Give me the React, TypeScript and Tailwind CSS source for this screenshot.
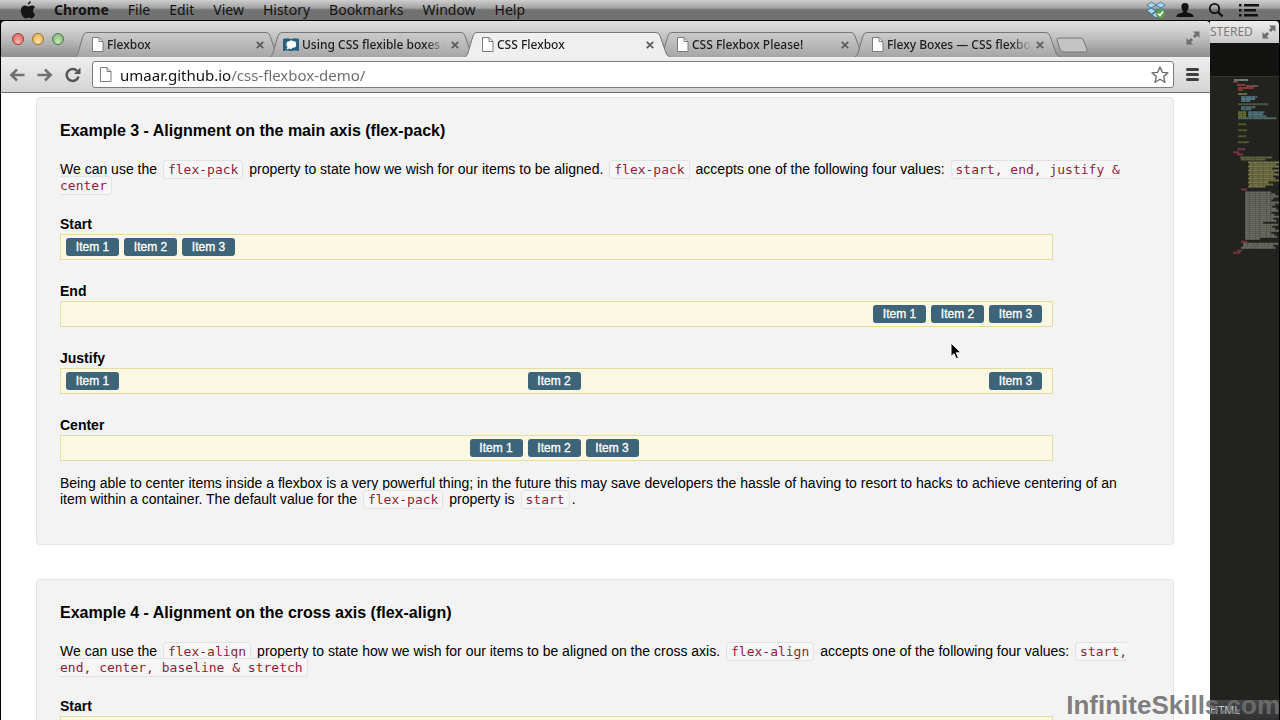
import React from "react";

const menuItems = ["File", "Edit", "View", "History", "Bookmarks", "Window", "Help"];

const tabs = [
  { title: "Flexbox", icon: "page", active: false },
  { title: "Using CSS flexible boxes –", icon: "mdn", active: false },
  { title: "CSS Flexbox", icon: "page", active: true },
  { title: "CSS Flexbox Please!", icon: "page", active: false },
  { title: "Flexy Boxes — CSS flexbox", icon: "page", active: false },
];

const packExamples = [
  { name: "Start", justify: "justify-start" },
  { name: "End", justify: "justify-end" },
  { name: "Justify", justify: "justify-between" },
  { name: "Center", justify: "justify-center" },
];

// [x, y, width, colour] of every line in the editor minimap
const minimapLines: [number, number, number, string][] = [
  [24, 3, 14, "#8a8a80"],
  [23, 5, 5, "#8b3a4a"],
  [27, 8, 8, "#a04040"],
  [36, 9, 12, "#7d5a45"],
  [28, 11, 16, "#a33d3d"],
  [28, 13, 5, "#8b3a3a"],
  [28, 17, 9, "#6c7a45"],
  [31, 20, 16, "#4f7884"],
  [31, 22, 14, "#5b8490"],
  [31, 24, 9, "#4f7884"],
  [28, 27, 30, "#58614a"],
  [31, 30, 14, "#4f7884"],
  [31, 32, 10, "#4f7884"],
  [28, 35, 8, "#6f7a35"],
  [38, 35, 16, "#4f7884"],
  [28, 37, 8, "#6f7a35"],
  [38, 37, 15, "#5b8490"],
  [28, 39, 8, "#6f7a35"],
  [38, 39, 18, "#4f7884"],
  [28, 41, 38, "#59786f"],
  [28, 47, 8, "#59622f"],
  [28, 53, 9, "#59622f"],
  [28, 59, 8, "#59622f"],
  [28, 65, 11, "#59622f"],
  [27, 72, 8, "#7a3f4a"],
  [23, 75, 6, "#8b3a4a"],
  [27, 77, 6, "#8b3a4a"],
  [30, 80, 32, "#6a6c45"],
  [31, 82, 24, "#6a6c45"],
  [38, 85, 31, "#8a8a55"],
  [39, 87, 27, "#7c7c4a"],
  [38, 89, 31, "#8a8a55"],
  [39, 91, 23, "#7c7c4a"],
  [38, 93, 31, "#8a8a55"],
  [39, 95, 25, "#7c7c4a"],
  [38, 97, 31, "#8a8a55"],
  [39, 99, 24, "#7c7c4a"],
  [38, 101, 27, "#8a8a55"],
  [39, 103, 31, "#7c7c4a"],
  [38, 105, 20, "#8a8a55"],
  [39, 107, 24, "#7c7c4a"],
  [38, 109, 17, "#8a8a55"],
  [31, 112, 6, "#8b3a4a"],
  [35, 115, 26, "#77776f"],
  [35, 117, 30, "#77776f"],
  [35, 119, 33, "#77776f"],
  [35, 121, 28, "#77776f"],
  [35, 123, 26, "#77776f"],
  [35, 125, 34, "#77776f"],
  [35, 127, 30, "#77776f"],
  [35, 129, 27, "#77776f"],
  [35, 131, 31, "#77776f"],
  [35, 133, 33, "#77776f"],
  [35, 135, 26, "#77776f"],
  [35, 137, 29, "#77776f"],
  [35, 139, 34, "#77776f"],
  [35, 141, 28, "#77776f"],
  [35, 143, 31, "#77776f"],
  [35, 145, 18, "#77776f"],
  [35, 147, 33, "#77776f"],
  [35, 149, 27, "#77776f"],
  [35, 151, 30, "#77776f"],
  [35, 153, 34, "#77776f"],
  [35, 155, 26, "#77776f"],
  [35, 157, 29, "#77776f"],
  [35, 159, 32, "#77776f"],
  [35, 161, 15, "#77776f"],
  [31, 164, 6, "#8b3a4a"],
  [33, 166, 35, "#77776f"],
  [33, 168, 30, "#77776f"],
  [31, 170, 34, "#77776f"],
  [27, 173, 5, "#8b3a4a"],
  [23, 175, 7, "#8b3a4a"],
];

const AppleLogo = () => (
  <svg width="16" height="18" viewBox="0 0 16 18" className="fill-[#161616]">
    <path d="M10.8 0C11 1.600 9.600 3.500 7.900 3.500 7.700 1.900 9.200.2 10.800 0zM15.200 13.300c-.7 1.900-2.200 4.200-3.700 4.200-1.100 0-1.600-.7-2.900-.7s-1.900.7-2.900.7C3.600 17.500.8 13.500.8 9.600c0-3.200 2-5 4.100-5 1.400 0 2.500.9 3.400.9.8 0 2.100-1 3.700-1 1.200 0 2.400.6 3.100 1.700-2.900 1.700-2.400 5.800.1 7.100z" />
  </svg>
);

const PageIcon = () => (
  <svg width="12" height="15" viewBox="0 0 12 15" className="shrink-0">
    <path d="M.5.5h6.500l4 4v10H.5z" fill="#fff" stroke="#7b7b7b" />
    <path d="M7 .5v4h4" fill="none" stroke="#7b7b7b" />
  </svg>
);

const MdnIcon = () => (
  <svg width="16" height="14" viewBox="0 0 16 14" className="shrink-0">
    <path d="M0 1q4-1.500 8 0 4-1.500 8 0v12q-4-1-8 0-4-1-8 0z" fill="#28617f" />
    <path d="M3.500 6q0-3 3-2.700Q8 1.500 9.800 3.100 13.500 3 13 6.500 13.500 10 9.500 9.800L8 11.300 6.500 10.500 3.500 11.500l1-2.500Q3 8 3.500 6z" fill="#fff" />
  </svg>
);

const ExpandIcon = () => (
  <svg width="14" height="14" viewBox="0 0 14 14" className="fill-[#6f6f6f]">
    <path d="M7 .5h6.500V7l-2.200-2.200L9 7.100 6.900 5l2.300-2.300zM7 13.500H.5V7l2.200 2.200L5 6.900 7.100 9l-2.300 2.300z" />
  </svg>
);

const MenuBar = () => (
  <header className="flex h-[21px] shrink-0 items-center border-b border-black bg-linear-to-b from-[#cfcfcf] from-0% via-[#a2a2a2] via-40% to-[#727272] to-50% px-5 text-sm leading-5 text-[#141414]">
    <button aria-label="Apple menu">
      <AppleLogo />
    </button>
    <nav className="ml-[18px] flex flex-1 items-center gap-[19px]">
      <button className="font-bold">Chrome</button>
      {menuItems.map((item) => (
        <button key={item}>{item}</button>
      ))}
    </nav>
    <div className="flex items-center gap-[14px]">
      <svg width="20" height="18" viewBox="0 0 20 18" className="-mr-1">
        <path d="M5.500 1 10 4 5 7 .8 4.200zM14.500 1 10 4l5 3 4.200-2.800zM.8 9.500 5 7l5 3-4.500 3zM19.200 9.500 15 7l-5 3 4.500 3zM5.500 13.800 10 11l4.500 2.800L10 16.800z" fill="#a9d4ec" stroke="#2c6b92" strokeWidth=".8" />
        <circle cx="14.500" cy="12.500" r="4.500" fill="#5d9b45" />
        <path d="m12 12.500 2 2 3-4" fill="none" stroke="#fff" strokeWidth="1.500" />
      </svg>
      <svg width="18" height="16" viewBox="0 0 18 16" className="fill-[#111]">
        <path d="M9 1c2.500 0 3.800 1.600 3.600 4-.1 1.600-.8 3-1.600 3.900-.3 1.300.4 1.700 2 2.200 2.600.8 4.500 1.400 4.700 3.900H.3c.2-2.500 2.100-3.100 4.700-3.900 1.600-.5 2.300-.9 2-2.200-.8-.9-1.500-2.300-1.600-3.900C5.200 2.600 6.500 1 9 1z" />
      </svg>
      <svg width="16" height="16" viewBox="0 0 16 16" fill="none" stroke="#111">
        <circle cx="6.500" cy="6.500" r="4.700" strokeWidth="1.800" />
        <path d="m10 10 4.500 4.500" strokeWidth="2.400" />
      </svg>
      <svg width="22" height="14" viewBox="0 0 22 14" className="fill-[#111]">
        <path d="M1 1h2.500v2.500H1zM1 6h2.500v2.500H1zM1 11h2.500v2.500H1zM6 1h15v2.500H6zM6 6h12v2.500H6zM6 11h14v2.500H6z" />
      </svg>
    </div>
  </header>
);

const TabStrip = () => (
  <div className="flex h-9 items-end bg-linear-to-b from-[#e2e2e2] via-[#bdbdbd] via-50% to-[#8e8e8e] pl-[11px]">
    <div className="flex w-[63px] items-center gap-2 self-center">
      <button aria-label="Close window" className="size-3 rounded-full border border-[#9a3c3c] bg-radial-[at_50%_80%] from-[#ffb9b0] to-[#d9534f]" />
      <button aria-label="Minimize window" className="size-3 rounded-full border border-[#9c7434] bg-radial-[at_50%_80%] from-[#ffe9a8] to-[#dfa23f]" />
      <button aria-label="Zoom window" className="size-3 rounded-full border border-[#4f7a4a] bg-radial-[at_50%_80%] from-[#cdebc0] to-[#6fa765]" />
    </div>
    <div role="tablist" className="flex min-w-0">
      {tabs.map((tab) => (
        <div
          key={tab.title}
          className={`relative -mr-[10px] flex h-[25px] w-[205px] min-w-0 items-center pl-[17px] pr-4 ${
            tab.active ? "z-10" : ""
          }`}
        >
          <svg className="absolute inset-0 size-full" viewBox="0 0 205 25" preserveAspectRatio="none">
            <defs>
              <linearGradient id="tabShade" x1="0" y1="0" x2="0" y2="1">
                <stop offset="0" stopColor="#cccccc" />
                <stop offset="1" stopColor="#a6a6a6" />
              </linearGradient>
            </defs>
            <path
              d="M0 25Q2 24 3 21L8 4Q9 .5 12 .5H191Q194 .5 195 4L201 21Q202 24 205 25"
              fill={tab.active ? "#efefef" : "url(#tabShade)"}
              stroke="#777"
            />
          </svg>
          <button
            role="tab"
            aria-selected={tab.active}
            className={`relative flex min-w-0 flex-1 items-center gap-[3px] text-left text-xs font-medium text-[#1c1c1c] ${
              tab.icon === "mdn" ? "-ml-1" : ""
            }`}
          >
            {tab.icon === "mdn" ? <MdnIcon /> : <PageIcon />}
            <span className="flex-1 overflow-hidden whitespace-nowrap mask-r-from-85%">{tab.title}</span>
          </button>
          <button aria-label={`Close ${tab.title}`} className="relative ml-1">
            <svg width="8" height="8" viewBox="0 0 8 8" stroke="#5c5c5c" strokeWidth="1.800">
              <path d="m.8.8 6.400 6.400M7.200.8.800 7.200" />
            </svg>
          </button>
        </div>
      ))}
    </div>
    <button aria-label="New tab" className="mb-1 ml-[6px] shrink-0">
      <svg width="32" height="16" viewBox="0 0 32 16">
        <path d="M3 1h21q3 0 4 3l3 9q.5 2-2 2H8q-3 0-4-3L1 3q-.500-2 2-2z" fill="#c4c4c4" stroke="#777" />
      </svg>
    </button>
    <button aria-label="Full screen" className="mb-[12px] ml-auto mr-[10px]">
      <ExpandIcon />
    </button>
  </div>
);

const Toolbar = () => (
  <div className="flex h-9 items-center border-b border-[#6e6e6e] bg-linear-to-b from-[#efefef] to-[#d4d4d4] pl-2 pr-[11px]">
    <div className="flex items-center gap-[12px]">
      <button aria-label="Back">
        <svg width="16" height="14" viewBox="0 0 16 14" fill="none" stroke="#707070" strokeWidth="2.500">
          <path d="M15.500 7H3M8 1.500 2.300 7 8 12.500" />
        </svg>
      </button>
      <button aria-label="Forward">
        <svg width="16" height="14" viewBox="0 0 16 14" fill="none" stroke="#707070" strokeWidth="2.500">
          <path d="M.5 7H13M8 1.500 13.700 7 8 12.500" />
        </svg>
      </button>
      <button aria-label="Reload">
        <svg width="16" height="16" viewBox="0 0 16 16">
          <path d="M13.500 9.500A6 6 0 1 1 12 3.800" fill="none" stroke="#555" strokeWidth="2.500" />
          <path d="M15.500.5v6.500H9z" fill="#555" />
        </svg>
      </button>
    </div>
    <div className="ml-[11px] flex h-[27px] flex-1 items-center rounded-[3px] border border-[#7d7d7d] bg-white px-1">
      <span className="ml-[3px]">
        <PageIcon />
      </span>
      <input
        aria-label="Address"
        defaultValue="umaar.github.io/css-flexbox-demo/"
        className="ml-2 w-[260px] bg-linear-to-r from-[#111] from-[111px] to-[#6a6a6a] to-[111px] bg-clip-text text-[15px] leading-6 text-transparent outline-none"
      />
      <button aria-label="Bookmark this page" className="ml-auto">
        <svg width="18" height="18" viewBox="0 0 18 18" fill="#fff" stroke="#666" strokeWidth="1.300" strokeLinejoin="round">
          <path d="m9 1 2.300 5.300 5.700.5-4.300 3.800 1.300 5.700L9 13.300l-5 3 1.300-5.700L1 6.800l5.700-.5z" />
        </svg>
      </button>
    </div>
    <button aria-label="Chrome menu" className="ml-[12px] flex w-[13px] flex-col gap-[2px]">
      <span className="h-[3px] rounded-sm bg-[#3f3f3f]" />
      <span className="h-[3px] rounded-sm bg-[#3f3f3f]" />
      <span className="h-[3px] rounded-sm bg-[#3f3f3f]" />
    </button>
  </div>
);

const Code = ({ children }: { children: React.ReactNode }) => (
  <code className="mx-[2px] rounded-[3px] border border-[#e2e2e2] bg-[#f6f6f6] px-1 py-px font-['DejaVu_Sans_Mono',monospace] text-[13px] leading-none text-[#8e1f38]">
    {children}
  </code>
);

const FlexDemo = ({ name, justify }: { name: string; justify: string }) => (
  <div className="mb-[22px]">
    <h4 className="mb-px text-sm font-bold leading-[18px]">{name}</h4>
    <div className={`box-content flex w-[90%] border border-[#e6dc9c] bg-[#faf7e3] px-[5px] py-[3px] ${justify}`}>
      {[1, 2, 3].map((n) => (
        <div
          key={n}
          className="mr-[5px] w-[53px] rounded-[3px] bg-[#3d6478] text-center text-xs leading-[18px] text-white [-webkit-text-stroke:0.3px_white]"
        >
          Item {n}
        </div>
      ))}
    </div>
  </div>
);

const Card = ({ title, children }: { title: string; children: React.ReactNode }) => (
  <section className="mb-[34px] rounded-[4px] border border-[#e4e4e4] bg-[#f3f3f3] px-[23px] pb-[37px] pt-[23px]">
    <h3 className="mb-5 text-base font-bold leading-5">{title}</h3>
    {children}
  </section>
);

const PageContent = () => (
  <main className="min-h-0 flex-1 overflow-hidden bg-white pl-[35px] pr-9 pt-1 font-['Liberation_Sans',Arial,sans-serif] text-sm leading-4 text-black">
    <Card title="Example 3 - Alignment on the main axis (flex-pack)">
      <p className="mb-[22px]">
        We can use the <Code>flex-pack</Code> property to state how we wish for our items to be aligned.{" "}
        <Code>flex-pack</Code> accepts one of the following four values:{" "}
        <Code>start, end, justify &amp; center</Code>
      </p>
      {packExamples.map((example) => (
        <FlexDemo key={example.name} {...example} />
      ))}
      <p className="-mt-2 pr-2">
        Being able to center items inside a flexbox is a very powerful thing; in the future this may save developers
        the hassle of having to resort to hacks to achieve centering of an item within a container. The default value
        for the <Code>flex-pack</Code> property is <Code>start</Code>.
      </p>
    </Card>
    <Card title="Example 4 - Alignment on the cross axis (flex-align)">
      <p className="mb-[22px]">
        We can use the <Code>flex-align</Code> property to state how we wish for our items to be aligned on the cross
        axis. <Code>flex-align</Code> accepts one of the following four values:{" "}
        <Code>start, end, center, baseline &amp; stretch</Code>
      </p>
      <FlexDemo name="Start" justify="justify-start" />
    </Card>
  </main>
);

const EditorWindow = () => (
  <aside className="flex w-[70px] shrink-0 flex-col overflow-hidden border-r border-black bg-[#22231e]">
    <div className="flex h-[22px] shrink-0 items-center justify-between rounded-tr-[4px] bg-linear-to-b from-[#ededed] to-[#c9c9c9] pr-[3px] text-xs text-[#7b7b7b]">
      STERED
      <ExpandIcon />
    </div>
    <div className="h-[34px] shrink-0 border-b border-[#33342f] bg-[#121210]" />
    <svg className="w-full flex-1" viewBox="0 0 70 620" preserveAspectRatio="xMinYMin slice">
      {minimapLines.map(([x, y, width, color]) => (
        <line
          key={`${x}-${y}`}
          x1={x}
          x2={x + width}
          y1={y}
          y2={y}
          stroke={color}
          strokeWidth="2"
          strokeDasharray="4 .3 6 .2"
          opacity=".85"
        />
      ))}
    </svg>
    <footer className="h-[20px] shrink-0 bg-linear-to-b from-[#474747] to-[#303030] text-[11px] leading-5 text-[#c9c9c9]">
      HTML
    </footer>
  </aside>
);

const App: React.FC = () => {
  return (
    <div className="relative flex h-screen flex-col overflow-hidden bg-black font-['Noto_Sans','Open_Sans',sans-serif]">
      <MenuBar />
      <div className="flex min-h-0 flex-1">
        <div className="ml-px flex min-w-0 flex-1 flex-col overflow-hidden rounded-t-[4px]">
          <TabStrip />
          <Toolbar />
          <PageContent />
        </div>
        <EditorWindow />
      </div>

      {/* mouse pointer */}
      <svg className="absolute left-[950px] top-[342px]" width="12" height="18" viewBox="0 0 12 18">
        <path d="M1 1v13.500l3-2.800 2.200 5 2.300-1-2.200-4.900H11z" fill="#000" stroke="#fff" />
      </svg>

      <div className="absolute bottom-0 right-0 font-['Liberation_Sans',Arial,sans-serif] text-[26px] font-bold leading-[30px] text-[#6f6f6f]/90">
        InfiniteSkills.com
      </div>
    </div>
  );
};

export default App;
